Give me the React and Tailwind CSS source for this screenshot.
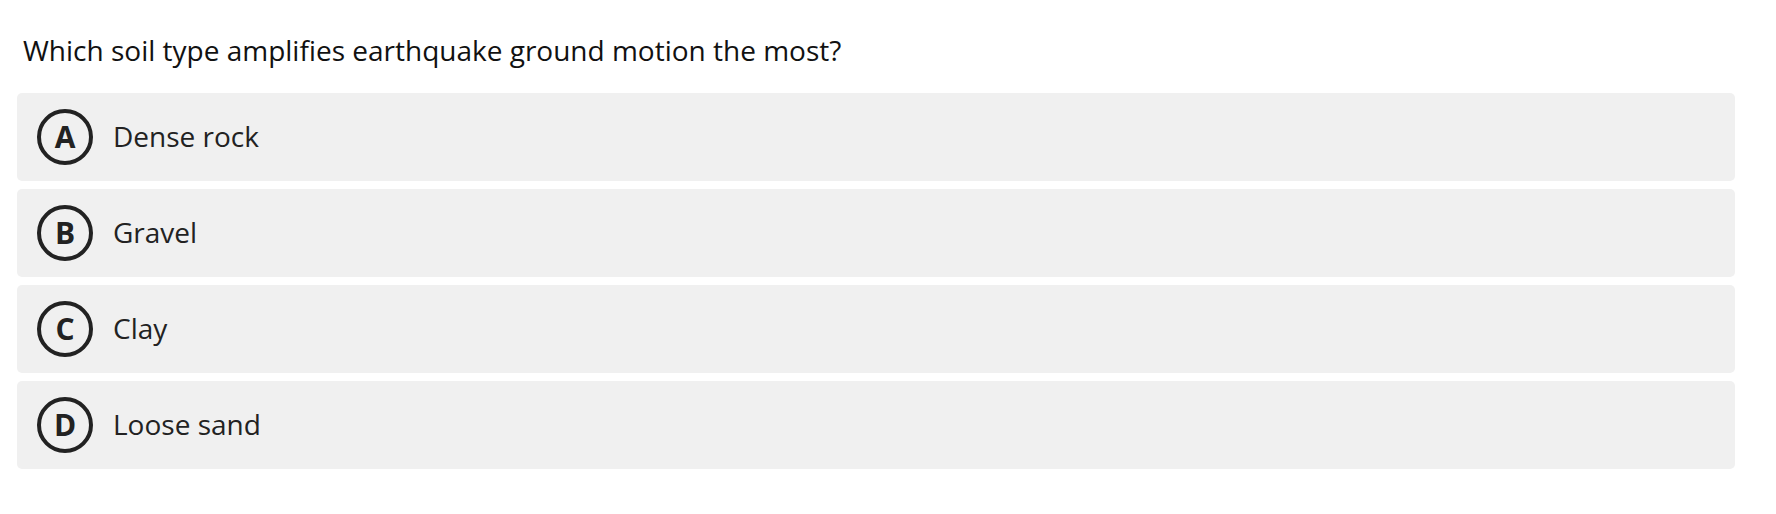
export default function App() {
  const options = [
    { letter: "A", text: "Dense rock" },
    { letter: "B", text: "Gravel" },
    { letter: "C", text: "Clay" },
    { letter: "D", text: "Loose sand" },
  ];
  return (
    <div
      className="w-[1776px] h-[514px] bg-white"
      style={{ fontFamily: '"Open Sans", "Noto Sans", sans-serif' }}
    >
      <div className="pt-[31px] pl-[17px] w-[1735px]">
        <div className="pl-[6px] text-[28px] leading-[38px] text-[#111111]">
          Which soil type amplifies earthquake ground motion the most?
        </div>
        <div className="mt-[24px] flex flex-col gap-[8px]">
          {options.map((o) => (
            <div
              key={o.letter}
              className="h-[88px] rounded-[5px] bg-[#f0f0f0] flex items-center pl-[20px]"
            >
              <div className="w-[56px] h-[56px] rounded-full border-[4px] border-[#222222] flex items-center justify-center text-[30px] font-bold text-[#222222] leading-none">
                {o.letter}
              </div>
              <div className="ml-[20px] pb-[2px] text-[28px] leading-[38px] text-[#222222]">
                {o.text}
              </div>
            </div>
          ))}
        </div>
      </div>
    </div>
  );
}
